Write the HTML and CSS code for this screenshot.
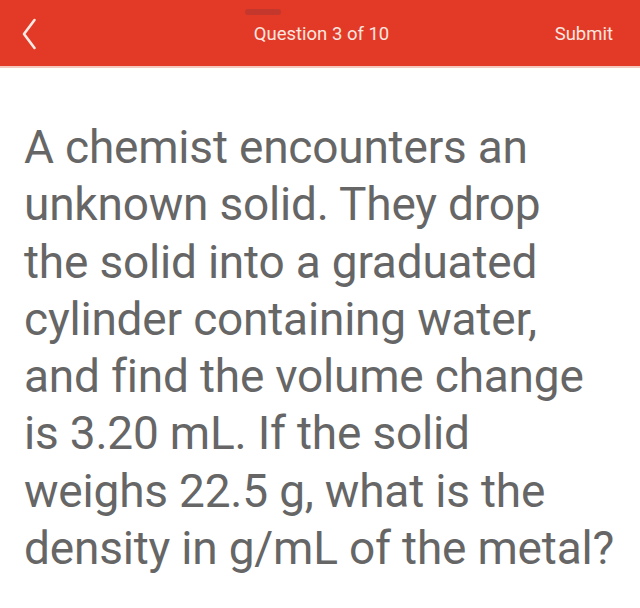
FILE: index.html
```html
<!DOCTYPE html>
<html>
<head>
<meta charset="utf-8">
<link rel="stylesheet" href="styles.css">
</head>
<body>
<header class="bar">
  <div class="handle"></div>
  <button class="back" aria-label="Back">
    <svg width="16" height="32" viewBox="0 0 16 32"><path d="M13.5 2 L3 16 L13.5 30" fill="none" stroke="#fbe9e4" stroke-width="2.6" stroke-linecap="round" stroke-linejoin="round"/></svg>
  </button>
  <div class="title">Question 3 of 10</div>
  <div class="submit">Submit</div>
</header>
<main class="question">
  <p class="text">A chemist encounters an<br>unknown solid. They drop<br>the solid into a graduated<br>cylinder containing water,<br>and find the volume change<br>is 3.20 mL. If the solid<br>weighs 22.5 g, what is the<br>density in g/mL of the metal?</p>
</main>
</body>
</html>
```
FILE: styles.css
```css
html, body { margin: 0; padding: 0; background: #fff; }
body { width: 640px; height: 608px; overflow: hidden; font-family: Roboto, "Liberation Sans", sans-serif; }
.bar {
  position: relative;
  height: 66px;
  background: #e23a26;
  border-bottom: 2px solid #f3c9bf;
  display: grid;
  grid-template-columns: 1fr auto 1fr;
  align-items: center;
  padding: 0 27px 0 20px;
  box-sizing: content-box;
}
.handle {
  position: absolute;
  left: 245px; top: 9px;
  width: 36px; height: 6px;
  border-radius: 3px;
  background: #c4372d;
}
.back { background: none; border: 0; padding: 0; margin: 0; justify-self: start; display: flex; margin-top: 2px; margin-left: 1px; }
.title { color: #fbe6e0; font-size: 18.5px; text-align: center; padding-left: 10px; margin-top: 1px; }
.submit { color: #fbe6e0; font-size: 18.5px; justify-self: end; margin-top: 1px; }
.question { padding: 0 24px; }
.text {
  margin: 51px 0 0 0;
  color: #666;
  font-size: 46px;
  line-height: 57.3px;
  letter-spacing: -0.2px;
  font-weight: 400;
}
```
